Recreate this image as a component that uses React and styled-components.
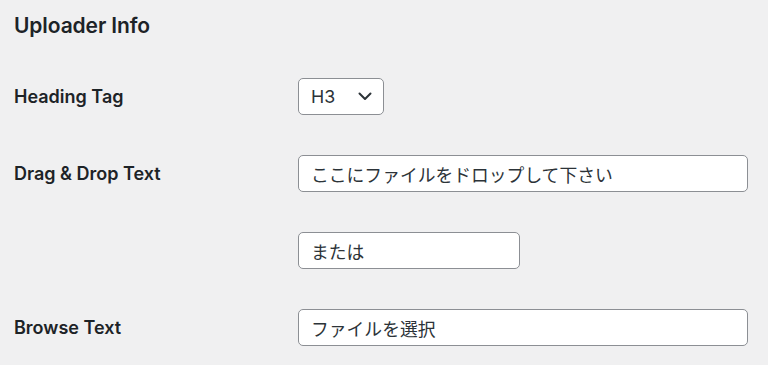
import React from "react";
import styled, { createGlobalStyle } from "styled-components";

const GlobalStyle = createGlobalStyle`
  html, body {
    margin: 0;
    padding: 0;
    background: #f0f0f1;
  }
  body {
    font-family: Inter, "Noto Sans", "Noto Sans CJK JP", sans-serif;
    color: #1d2327;
  }
`;

const Page = styled.div`
  padding: 0 20px 0 14px;
`;

const Title = styled.h2`
  margin: 0;
  padding: 12px 0 19px;
  font-size: 21px;
  line-height: 27px;
  font-weight: 600;
  letter-spacing: -0.1px;
`;

const Form = styled.div`
  display: grid;
  grid-template-columns: 284px 450px;
`;

const Label = styled.div`
  display: flex;
  align-items: center;
  height: 77px;
  font-size: 18px;
  font-weight: 600;
`;

const Field = styled.div`
  display: flex;
  align-items: center;
  height: 77px;
`;

const Input = styled.input`
  box-sizing: border-box;
  width: ${(p) => p.$width || "450px"};
  height: 37px;
  padding: 0 12px;
  border: 1px solid #8c8f94;
  border-radius: 5px;
  background: #fff;
  color: #2c3338;
  font-family: Inter, "Noto Sans CJK JP", sans-serif;
  font-size: 17.8px;
  outline: none;
`;

const Select = styled.div`
  box-sizing: border-box;
  width: 86px;
  height: 37px;
  display: flex;
  align-items: center;
  justify-content: space-between;
  padding: 0 11px 0 12px;
  border: 1px solid #8c8f94;
  border-radius: 5px;
  background: #fff;
  color: #2c3338;
  font-size: 17.8px;
`;

const Chevron = () => (
  <svg width="14" height="9" viewBox="0 0 14 9" fill="none">
    <path d="M1.5 1.5 L7 7 L12.5 1.5" stroke="#2c3338" strokeWidth="2" strokeLinecap="round" strokeLinejoin="round" />
  </svg>
);

export default function App() {
  return (
    <Page>
      <GlobalStyle />
      <Title>Uploader Info</Title>
      <Form>
        <Label>Heading Tag</Label>
        <Field>
          <Select>
            <span>H3</span>
            <Chevron />
          </Select>
        </Field>

        <Label>Drag &amp; Drop Text</Label>
        <Field>
          <Input defaultValue="ここにファイルをドロップして下さい" />
        </Field>

        <Label />
        <Field>
          <Input $width="222px" defaultValue="または" />
        </Field>

        <Label>Browse Text</Label>
        <Field>
          <Input defaultValue="ファイルを選択" />
        </Field>
      </Form>
    </Page>
  );
}
